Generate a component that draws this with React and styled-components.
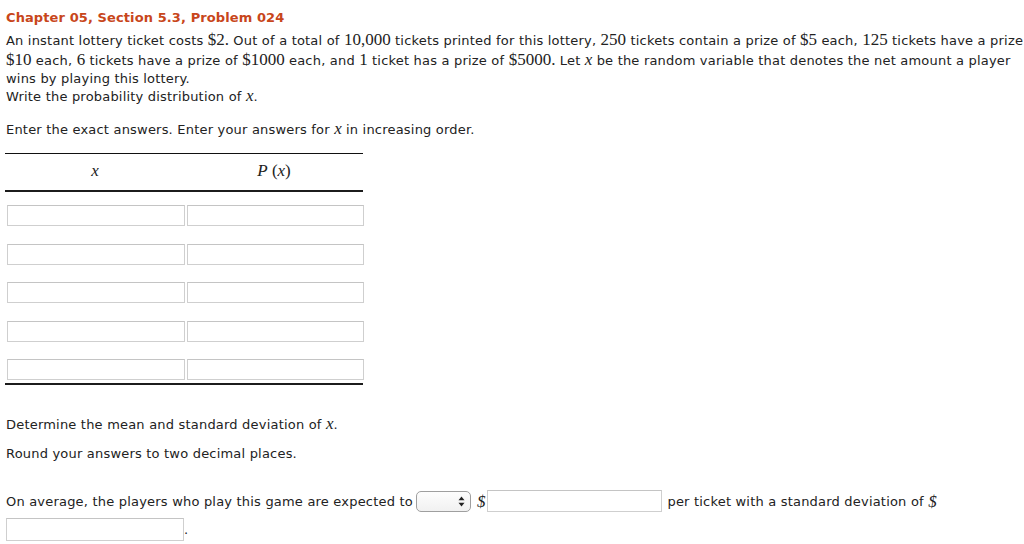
import React from "react";
import styled, { createGlobalStyle } from "styled-components";

const Global = createGlobalStyle`
  html, body { margin: 0; padding: 0; background: #fff; overflow: hidden; }
  body { font-family: "DejaVu Sans", Verdana, sans-serif; font-size: 13px; letter-spacing: 0.2px; color: #222; }
`;

const Page = styled.div`
  padding: 10px 0 0 6px;
  width: 1100px;
`;

const Title = styled.h1`
  margin: 0;
  font-size: 13px;
  line-height: 16px;
  font-weight: bold;
  letter-spacing: 0.1px;
  color: #c8461b;
`;

const Problem = styled.div`
  margin-top: 4px;
`;

const Line = styled.div`
  white-space: nowrap;
  height: ${(p) => p.$h || 17}px;
  line-height: ${(p) => p.$h || 17}px;
`;

const M = styled.span`
  font-family: "Liberation Serif", "Times New Roman", serif;
  font-size: 17px;
  letter-spacing: 0;
  font-style: ${(p) => (p.$i ? "italic" : "normal")};
`;

const Para = styled.p`
  margin: ${(p) => p.$mt || 0}px 0 0;
  line-height: 17px;
  white-space: nowrap;
`;

const Table = styled.div`
  margin-top: 15px;
  width: 358px;
  margin-left: -1px;
  border-top: 1px solid #111;
  border-bottom: 2px solid #1c1c1c;
`;

const HeadRow = styled.div`
  display: grid;
  grid-template-columns: 180px 178px;
  height: 36px;
  align-items: center;
  border-bottom: 2px solid #1c1c1c;
`;

const HeadCell = styled.div`
  text-align: center;
  padding-bottom: 3px;
`;

const Body = styled.div`
  display: grid;
  grid-template-columns: 180px 178px;
  grid-auto-rows: 21px;
  row-gap: 17.5px;
  padding: 13px 0 3px 2px;
`;

const Box = styled.div`
  box-sizing: border-box;
  width: ${(p) => p.$w || 178}px;
  height: ${(p) => p.$h || 21}px;
  border: 1px solid #cfcfcf;
  border-top-color: #c4c4c4;
  background: #fff;
  display: inline-block;
  vertical-align: middle;
`;

const AnswerRow = styled.div`
  margin-top: ${(p) => p.$mt || 0}px;
  display: flex;
  align-items: center;
  white-space: nowrap;
  line-height: 17px;
`;

const Select = styled.div`
  box-sizing: border-box;
  width: 55px;
  height: 21px;
  margin: 0 6px 0 3px;
  border: 1px solid #9f9f9f;
  border-radius: 5px;
  background: linear-gradient(#fdfdfd, #f1f1f1);
  display: flex;
  align-items: center;
  justify-content: flex-end;
  padding-right: 5px;
`;

const Dollar = styled(M)`
  font-style: italic;
  margin-right: ${(p) => p.$mr || 0}px;
`;

const Spacer = styled.span`
  display: inline-block;
  width: ${(p) => p.$w}px;
`;

export default function App() {
  return (
    <Page>
      <Global />
      <Title>Chapter 05, Section 5.3, Problem 024</Title>
      <Problem>
        <Line $h={20}>
          An instant lottery ticket costs <M>$2.</M> Out of a total of <M>10,000</M> tickets printed for this lottery, <M>250</M> tickets contain a prize of <M>$5</M> each, <M>125</M> tickets have a prize of
        </Line>
        <Line $h={20}>
          <M>$10</M> each, <M>6</M> tickets have a prize of <M>$1000</M> each, and <M>1</M> ticket has a prize of <M>$5000.</M> Let <M $i>x</M> be the random variable that denotes the net amount a player
        </Line>
        <Line>wins by playing this lottery.</Line>
        <Line>
          Write the probability distribution of <M $i>x</M>.
        </Line>
      </Problem>
      <Para $mt={16}>
        Enter the exact answers. Enter your answers for <M $i>x</M> in increasing order.
      </Para>
      <Table>
        <HeadRow>
          <HeadCell>
            <M $i>x</M>
          </HeadCell>
          <HeadCell>
            <M $i>P</M>
            <M> (</M>
            <M $i>x</M>
            <M>)</M>
          </HeadCell>
        </HeadRow>
        <Body>
          {Array.from({ length: 10 }).map((_, i) => (
            <Box key={i} $w={i % 2 === 0 ? 178 : 177} />
          ))}
        </Body>
      </Table>
      <Para $mt={30}>
        Determine the mean and standard deviation of <M $i>x</M>.
      </Para>
      <Para $mt={12}>Round your answers to two decimal places.</Para>
      <AnswerRow $mt={28}>
        On average, the players who play this game are expected to
        <Select>
          <svg width="7" height="11" viewBox="0 0 7 11">
            <path d="M3.5 0.5 L6.5 4.2 L0.5 4.2 Z" fill="#222" />
            <path d="M3.5 10.5 L6.5 6.8 L0.5 6.8 Z" fill="#222" />
          </svg>
        </Select>
        <Dollar $mr={2}>$</Dollar>
        <Box $w={175} $h={22} />
        <Spacer $w={5} />
        per ticket with a standard deviation of&nbsp;
        <Dollar>$</Dollar>
      </AnswerRow>
      <AnswerRow $mt={6}>
        <Box $w={178} $h={23} />
        <span>.</span>
      </AnswerRow>
    </Page>
  );
}
